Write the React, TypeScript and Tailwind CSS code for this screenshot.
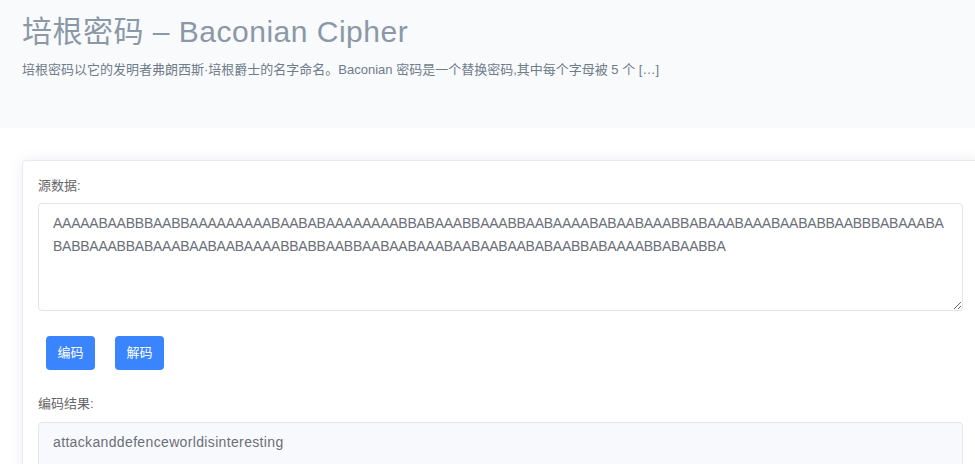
import React, { useState } from 'react';

const FONT = '"Liberation Sans", "Noto Sans CJK SC", Arial, sans-serif';

const SOURCE =
  'AAAAABAABBBAABBAAAAAAAAABAABABAAAAAAAABBABAAABBAAABBAABAAAABABAABAAABBABAAABAAABAABABBAABBBABAAABABABBAAABBABAAABAABAABAAAABBABBAABBAABAABAAABAABAABAABABAABBABAAAABBABAABBA';

export default function App() {
  const [source, setSource] = useState(SOURCE);
  const [result] = useState('attackanddefenceworldisinteresting');

  return (
    <div className="min-h-screen w-[975px] overflow-hidden bg-white" style={{ fontFamily: FONT }}>
      {/* Header */}
      <div className="h-[128px] bg-[#f9fafc] px-[22px] pt-[13px]">
        <h1 className="text-[30px] leading-[38px] font-normal tracking-[0.5px] text-[#8a98a7]">
          培根密码 &ndash; Baconian Cipher
        </h1>
        <p className="mt-[10px] text-[13px] leading-[18px] text-[#6f7c89]">
          培根密码以它的发明者弗朗西斯·培根爵士的名字命名。Baconian 密码是一个替换密码,其中每个字母被 5 个 [&hellip;]
        </p>
      </div>

      {/* Card */}
      <div className="ml-[22px] mt-[32px] w-[957px] rounded-[4px] border border-[#e8e9f0] bg-white px-[15px] pt-[15px] pb-6 shadow-[0_0_14px_rgba(30,40,90,0.08)]">
        <label className="block text-[13px] leading-[20px] text-[#666]">源数据:</label>
        <textarea
          value={source}
          onChange={e => setSource(e.target.value)}
          className="mt-[7px] block h-[108px] w-[925px] resize-y rounded-[4px] border border-[#e3e4ec] bg-white pl-[14px] pr-[10px] py-[8px] text-[14px] leading-[23px] tracking-[-0.25px] text-[#6a6f78] outline-none break-all"
          style={{ fontFamily: FONT }}
        />
        <div className="mt-[25px] flex gap-[20px] pl-[8px]">
          <button className="h-[34px] w-[49px] rounded-[4px] bg-[#3a85fd] text-[13px] text-white">编码</button>
          <button className="h-[34px] w-[49px] rounded-[4px] bg-[#3a85fd] text-[13px] text-white">解码</button>
        </div>
        <label className="mt-[24px] block text-[13px] leading-[20px] text-[#666]">编码结果:</label>
        <div className="mt-[8px] h-[100px] w-[925px] rounded-[4px] border border-[#e3e5ef] bg-[#f8f9fc] px-[14px] py-[8px] text-[14px] leading-[23px] tracking-[0.35px] text-[#6a6f78]">
          {result}
        </div>
      </div>
    </div>
  );
}
